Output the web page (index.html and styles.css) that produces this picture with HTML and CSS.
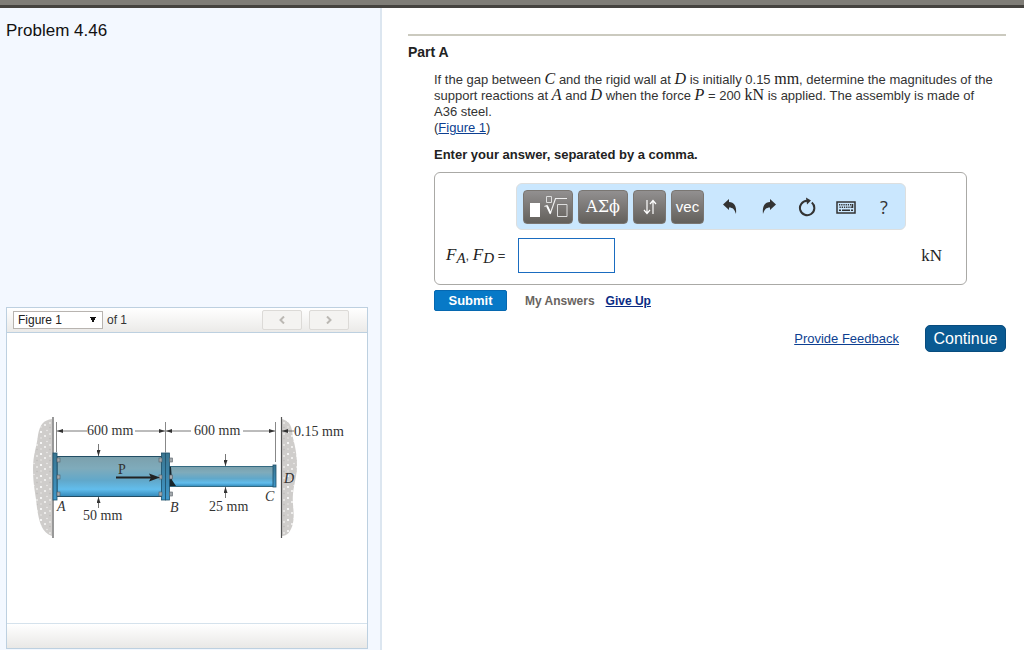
FILE: index.html
```
<!DOCTYPE html>
<html lang="en">
<head>
    <meta charset="UTF-8">
    <meta name="viewport" content="width=device-width, initial-scale=1.0">
    <title>Problem 4.46</title>
    <link rel="stylesheet" href="styles.css">
</head>
<body>
    <div class="topbar"></div>

    <div class="page">
        <aside class="sidebar">
            <h1>Problem 4.46</h1>

            <section class="figure-box">
                <div class="figure-header">
                    <select id="figureSelect" aria-label="Figure">
                        <option>Figure 1</option>
                    </select>
                    <label for="figureSelect">of 1</label>
                    <div class="figure-nav">
                        <button type="button" aria-label="Previous figure" disabled>
                            <svg width="8" height="8" viewBox="0 0 8 8"><path d="M6 0.5L2.5 4L6 7.5"/></svg>
                        </button>
                        <button type="button" aria-label="Next figure" disabled>
                            <svg width="8" height="8" viewBox="0 0 8 8"><path d="M2 0.5L5.5 4L2 7.5"/></svg>
                        </button>
                    </div>
                </div>

                <div class="figure-body">
                    <svg class="diagram" viewBox="30 415 320 125" role="img" aria-label="Stepped shaft between two walls">
                        <defs>
                            <linearGradient id="steel" x1="0" y1="0" x2="0" y2="1">
                                <stop offset="0" stop-color="#7ba0ac"/>
                                <stop offset="0.3" stop-color="#7fabbb"/>
                                <stop offset="0.6" stop-color="#61a8ca"/>
                                <stop offset="0.82" stop-color="#62bdec"/>
                                <stop offset="1" stop-color="#3288b9"/>
                            </linearGradient>
                            <linearGradient id="flange" x1="0" y1="0" x2="0" y2="1">
                                <stop offset="0" stop-color="#3a7590"/>
                                <stop offset="1" stop-color="#3f98ca"/>
                            </linearGradient>
                            <filter id="soft" x="-20%" y="-5%" width="140%" height="110%">
                                <feGaussianBlur stdDeviation="0.7"/>
                            </filter>
                            <pattern id="grain" width="13" height="11" patternUnits="userSpaceOnUse">
                                <rect width="13" height="11" fill="#cfcdcb"/>
                                <circle cx="2" cy="3" r="1.1" fill="#fff"/>
                                <circle cx="8" cy="1.5" r="0.7" fill="#f4f3f2"/>
                                <circle cx="6" cy="7" r="1.1" fill="#f6f5f4"/>
                                <circle cx="11" cy="5" r="0.8" fill="#fff"/>
                                <circle cx="2" cy="9" r="0.7" fill="#f0efee"/>
                                <circle cx="11" cy="9.5" r="0.8" fill="#bfbdbb"/>
                            </pattern>
                            <marker id="tip" viewBox="0 0 6 4" refX="6" refY="2" markerWidth="6" markerHeight="4" markerUnits="userSpaceOnUse" orient="auto-start-reverse">
                                <path d="M0 0L6 2L0 4z" fill="#333"/>
                            </marker>
                        </defs>

                        <!-- walls -->
                        <g fill="url(#grain)" filter="url(#soft)">
                            <path d="M52 419C44 420 40 424 38 435C37 446 33 454 33 469C33 486 36 495 37 508C39 522 42 533 52 536z"/>
                            <path d="M282 419C290 421 292 426 293 438C295 446 297 454 297 466C297 476 294 483 293 494C292 505 295 513 293 523C291 532 287 536 282 536z"/>
                        </g>
                        <path d="M53 417V538M281.500 417V538" stroke="#555" stroke-width="1.200"/>

                        <!-- shafts -->
                        <rect x="57" y="456.500" width="106" height="40" fill="url(#steel)" stroke="#224e65"/>
                        <rect x="169" y="466.500" width="105" height="20" fill="url(#steel)" stroke="#346a82"/>
                        <path d="M169 466.500L171 467L172 480L176 486H169z" fill="#17242b"/>

                        <!-- flanges -->
                        <g fill="url(#flange)" stroke="#1f506a" stroke-width="0.800">
                            <rect x="53" y="453" width="4" height="47"/>
                            <rect x="161.500" y="453" width="4" height="47"/>
                            <rect x="165.500" y="453" width="4" height="47"/>
                            <rect x="273" y="465" width="3" height="22"/>
                        </g>
                        <g fill="#a4a9ad" stroke="#555e64" stroke-width="0.600">
                            <rect x="57" y="458" width="3" height="4"/>
                            <rect x="57" y="475" width="3" height="4"/>
                            <rect x="57" y="492" width="3" height="4"/>
                            <rect x="159" y="458" width="3" height="4"/>
                            <rect x="159" y="475" width="3" height="4"/>
                            <rect x="159" y="492" width="3" height="4"/>
                            <rect x="169.500" y="458" width="3" height="4"/>
                            <rect x="169.500" y="475" width="3" height="4"/>
                            <rect x="169.500" y="492" width="3" height="4"/>
                        </g>

                        <!-- force -->
                        <path d="M116 477.500H152" stroke="#222" stroke-width="1.800"/>
                        <path d="M149 473.500L160 477.500L149 481.500L151 477.500z" fill="#222"/>

                        <!-- dimensions -->
                        <path d="M56.500 422V452M165.500 422V452M275.500 422V462" stroke="#888" fill="none"/>
                        <g stroke="#555" stroke-width="0.800" fill="none" marker-end="url(#tip)">
                            <path d="M87 431H57"/>
                            <path d="M135 431H165"/>
                            <path d="M191 431H166"/>
                            <path d="M243 431H275"/>
                            <path d="M294 431H282"/>
                            <path d="M98.500 444V456"/>
                            <path d="M98.500 508V497"/>
                            <path d="M225.500 454V466"/>
                            <path d="M225.500 498V487"/>
                        </g>
                        <g class="diagram-text">
                            <text x="87" y="435">600 mm</text>
                            <text x="194" y="435">600 mm</text>
                            <text x="294" y="436">0.15 mm</text>
                            <text x="83" y="520">50 mm</text>
                            <text x="209" y="511">25 mm</text>
                            <text x="118" y="474">P</text>
                            <g font-style="italic">
                                <text x="57" y="511">A</text>
                                <text x="170" y="512">B</text>
                                <text x="265" y="501">C</text>
                                <text x="284" y="483">D</text>
                            </g>
                        </g>
                    </svg>
                </div>

                <div class="figure-footer"></div>
            </section>
        </aside>

        <main class="content">
            <h2>Part A</h2>

            <div class="part">
                <p class="question">
                    If the gap between <i class="math">C</i> and the rigid wall at <i class="math">D</i> is initially 0.15 <span class="math">mm</span>, determine the magnitudes of the support reactions at <i class="math">A</i> and <i class="math">D</i> when the force <i class="math">P</i> = 200 <span class="math">kN</span> is applied. The assembly is made of A36&nbsp;steel.<br>
                    (<a href="#figureSelect">Figure 1</a>)
                </p>
                <p class="instruction">Enter your answer, separated by a comma.</p>

                <form id="answerForm">
                    <div class="answer-box">
                        <div class="toolbar">
                            <button type="button" class="key key-wide" aria-label="Templates">
                                <svg width="40" height="26" viewBox="0 0 40 26">
                                    <path d="M2 9H12V23H2z" fill="#fff"/>
                                    <path d="M18.500 2.500H23.500V8.500H18.500zM29.500 10.500H39V22.500H29.500z" fill="none" stroke="#ddd"/>
                                    <path d="M16.500 12.500L19 11.500L22.500 19L27.500 4.500H39" fill="none" stroke="#eee" stroke-width="1.200"/>
                                    <path d="M19 12L22.500 19.500" stroke="#fff" stroke-width="1.800"/>
                                </svg>
                            </button>
                            <button type="button" class="key key-wide key-greek">ΑΣϕ</button>
                            <button type="button" class="key" aria-label="Subscripts and arrows">
                                <svg width="14" height="16" viewBox="0 0 14 16" fill="none" stroke="#fff" stroke-width="1.200">
                                    <path d="M4 1V14M1 11L4 14.500L7 11M10 15V2M7 5L10 1.500L13 5"/>
                                </svg>
                            </button>
                            <button type="button" class="key">vec</button>
                            <div class="tools">
                                <button type="button" aria-label="Undo">
                                    <svg width="16" height="18" viewBox="0 0 16 18"><path d="M1 6.500L7 1V4C12 4 15 8 14 16C12.500 11.500 11 9.500 7 9.500V12z"/></svg>
                                </button>
                                <button type="button" aria-label="Redo">
                                    <svg width="16" height="18" viewBox="0 0 16 18"><path d="M15 6.500L9 1V4C4 4 1 8 2 16C3.500 11.500 5 9.500 9 9.500V12z"/></svg>
                                </button>
                                <button type="button" aria-label="Reset">
                                    <svg width="18" height="20" viewBox="0 0 18 20">
                                        <path d="M13.800 5.500A7.200 7.200 0 1 1 9 3.800" fill="none" stroke="#333" stroke-width="2"/>
                                        <path d="M8 0.500L13 3.500L9 7.500z"/>
                                    </svg>
                                </button>
                                <button type="button" aria-label="Keyboard shortcuts">
                                    <svg width="20" height="16" viewBox="0 0 20 16">
                                        <rect x="1" y="3" width="18" height="11" fill="none" stroke="#333" stroke-width="1.500"/>
                                        <path d="M3 5.800H17M3.500 8.200H16" stroke="#333" stroke-width="1.400" stroke-dasharray="1.300 0.900"/>
                                        <path d="M3 11.200H5M6 11.200H14M15 11.200H17M16.500 5V9" stroke="#333" stroke-width="1.500"/>
                                    </svg>
                                </button>
                                <button type="button" class="help" aria-label="Help">?</button>
                            </div>
                        </div>
                        <div class="answer-row">
                            <label for="answerInput"><i class="math">F<sub>A</sub></i>, <i class="math">F<sub>D</sub></i> =</label>
                            <input type="text" id="answerInput">
                            <span class="unit">kN</span>
                        </div>
                    </div>

                    <div class="actions">
                        <button type="submit" class="submit-btn">Submit</button>
                        <span class="my-answers">My Answers</span>
                        <a href="#give-up">Give Up</a>
                    </div>
                </form>
            </div>

            <div class="page-actions">
                <a href="#feedback">Provide Feedback</a>
                <button type="button" class="continue-btn">Continue</button>
            </div>
        </main>
    </div>

    <script>
        document.getElementById('answerForm').addEventListener('submit', (e) => {
            e.preventDefault();
        });
    </script>
</body>
</html>
```
FILE: styles.css
```
* {
    box-sizing: border-box;
}

body {
    margin: 0;
    min-height: 100vh;
    display: flex;
    flex-direction: column;
    font-family: "Liberation Sans", Arial, sans-serif;
    font-size: 13px;
    line-height: 16px;
    color: #333;
    background: #fff;
}

h1, h2, p {
    margin: 0;
}

button {
    font-family: inherit;
    cursor: pointer;
}

a {
    color: #0d3f91;
}

.topbar {
    height: 8px;
    background: #7f7d77;
    border-bottom: 3px solid #45433f;
}

.page {
    flex: 1;
    display: flex;
}

/* left column */
.sidebar {
    flex: 0 0 382px;
    display: flex;
    flex-direction: column;
    justify-content: space-between;
    padding: 13px 12px 1px 6px;
    background: #f3f8ff;
    border-right: 2px solid #dce6f0;
}

h1 {
    font-size: 17px;
    font-weight: normal;
    line-height: 20px;
    color: #111;
}

.figure-box {
    border: 1px solid #bdd0e0;
    background: #fff;
}

.figure-header {
    display: flex;
    align-items: center;
    gap: 4px;
    height: 25px;
    padding: 0 18px 1px 6px;
    font-size: 12px;
    background: linear-gradient(#fff, #ebeae8);
    border-bottom: 1px solid #bdd0e0;
}

.figure-header select {
    appearance: none;
    width: 90px;
    height: 18px;
    padding: 0 4px;
    border: 1px solid #b8b4b0;
    border-radius: 0;
    font-family: inherit;
    font-size: 12px;
    color: #222;
    background:
        linear-gradient(to bottom left, #111 50%, transparent 50%) 76px 5px / 3px 6px no-repeat,
        linear-gradient(to bottom right, #111 50%, transparent 50%) 79px 5px / 3px 6px no-repeat,
        #fff;
}

.figure-nav {
    display: flex;
    gap: 7px;
    margin-left: auto;
}

.figure-nav button {
    width: 40px;
    height: 20px;
    padding: 0;
    border: 1px solid #dcdad7;
    border-radius: 2px;
    background: #f4f3f1;
}

.figure-nav path {
    fill: none;
    stroke: #bbb8b3;
    stroke-width: 2;
}

.figure-body {
    height: 290px;
    padding: 82px 17px 0 23px;
}

.diagram {
    display: block;
    width: 100%;
}

.diagram-text {
    font-family: "Liberation Serif", "Times New Roman", serif;
    font-size: 14px;
    fill: #333;
}

.figure-footer {
    height: 25px;
    background: linear-gradient(#fff, #e9e8e6);
    border-top: 1px solid #d5e2ec;
}

/* right column */
.content {
    flex: 1;
    min-width: 0;
    margin: 26px 18px 0 26px;
    border-top: 2px solid #cbcabf;
}

h2 {
    margin-top: 8px;
    font-size: 14px;
    line-height: 16px;
    color: #222;
}

.part {
    padding: 12px 0 0 26px;
}

.math {
    font-family: "Liberation Serif", "Times New Roman", serif;
    font-size: 17px;
    line-height: 0;
    color: #222;
}

.question .math {
    font-size: 16px;
}

.instruction {
    margin-top: 11px;
    font-weight: bold;
    color: #222;
}

.answer-box {
    max-width: 533px;
    height: 113px;
    margin-top: 9px;
    padding: 10px 24px 0 11px;
    border: 1px solid #aaa9a6;
    border-radius: 6px;
}

.toolbar {
    display: flex;
    align-items: center;
    gap: 5px;
    width: 390px;
    height: 47px;
    margin-left: 70px;
    padding: 0 9px 0 6px;
    border: 1px solid #dddfdf;
    border-radius: 6px;
    background: #cae7fe;
}

.key {
    display: flex;
    align-items: center;
    justify-content: center;
    width: 33px;
    height: 34px;
    padding: 0;
    border: 1px solid #7a7672;
    border-radius: 4px;
    font-size: 15px;
    color: #fff;
    background: linear-gradient(#929090, #63605b);
}

.key-wide {
    width: 50px;
}

.key-greek {
    font-family: "DejaVu Serif", serif;
    font-size: 16px;
}

.tools {
    flex: 1;
    display: flex;
    justify-content: space-between;
    margin-left: 9px;
}

.tools button {
    display: flex;
    align-items: center;
    justify-content: center;
    width: 24px;
    height: 24px;
    padding: 0;
    border: none;
    background: none;
    color: #333;
}

.tools svg {
    fill: #333;
}

.tools .help {
    font-family: "Open Sans", sans-serif;
    font-size: 18px;
}

.answer-row {
    display: flex;
    align-items: center;
    margin-top: 8px;
}

.answer-row label {
    width: 72px;
}

.answer-row sub {
    font-size: 15px;
    line-height: 0;
    vertical-align: -3px;
}

.answer-row input {
    width: 97px;
    height: 35px;
    padding: 0 6px;
    border: 1px solid #1a6cc0;
    font-size: 15px;
}

.unit {
    margin-left: auto;
    font-family: "Liberation Serif", "Times New Roman", serif;
    font-size: 17px;
    color: #222;
}

.actions {
    display: flex;
    align-items: center;
    margin-top: 5px;
    font-size: 12px;
    font-weight: bold;
}

.actions a {
    color: #0a2b84;
}

.submit-btn {
    width: 73px;
    height: 21px;
    padding: 0;
    border: 1px solid #0668b0;
    border-radius: 2px;
    font-size: 13px;
    font-weight: bold;
    color: #fff;
    background: #0779c7;
}

.my-answers {
    margin: 0 11px 0 18px;
    color: #69655f;
}

.page-actions {
    display: flex;
    align-items: center;
    justify-content: flex-end;
    gap: 26px;
    margin-top: 14px;
}

.continue-btn {
    width: 81px;
    height: 27px;
    padding: 0;
    border: 1px solid #084c7e;
    border-radius: 5px;
    font-size: 16px;
    color: #fff;
    background: #0a5a92;
}
```
